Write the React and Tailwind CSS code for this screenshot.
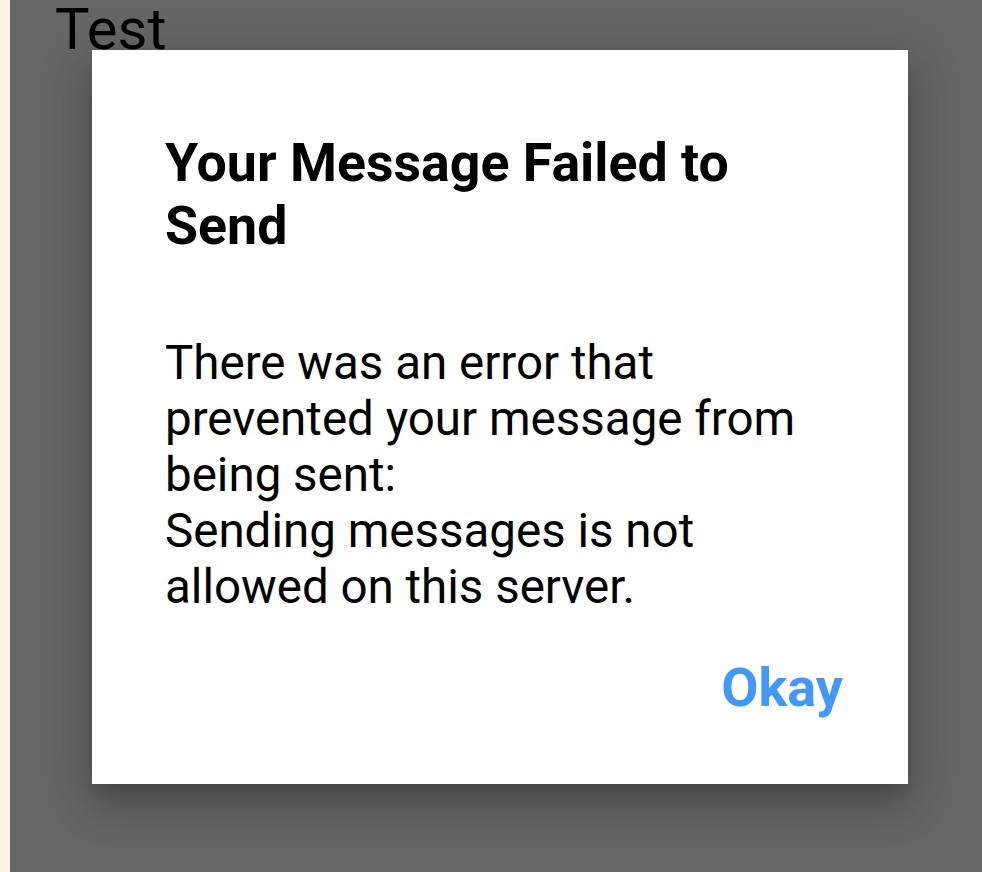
import React from "react";

export default function App() {
  return (
    <div
      className="flex h-[872px] w-full overflow-hidden"
      style={{ fontFamily: "Roboto, 'Noto Sans', sans-serif" }}
    >
      <div className="w-[10px] shrink-0 bg-[#fdf4dd]" />
      <div className="relative flex-1 bg-[#666666]">
        <div className="pl-[45px] text-[58px] leading-none text-black">Test</div>
        <div className="absolute left-[82px] top-[50px] flex h-[734px] w-[816px] flex-col bg-white pl-[73px] pr-[65px] pt-[81px] shadow-[0_24px_38px_3px_rgba(0,0,0,0.14),0_9px_46px_8px_rgba(0,0,0,0.12),0_11px_15px_-7px_rgba(0,0,0,0.2)]">
          <h1 className="text-[53.7px] font-bold leading-[63px] text-black">
            Your Message Failed to Send
          </h1>
          <p className="mt-[78px] text-[47.5px] leading-[56px] text-black">
            There was an error that prevented your message from being sent:
            <br />
            Sending messages is not allowed on this server.
          </p>
          <div className="mt-[41px] flex justify-end">
            <button className="text-[54px] font-bold leading-[63px] text-[#4397f5]">
              Okay
            </button>
          </div>
        </div>
      </div>
    </div>
  );
}
